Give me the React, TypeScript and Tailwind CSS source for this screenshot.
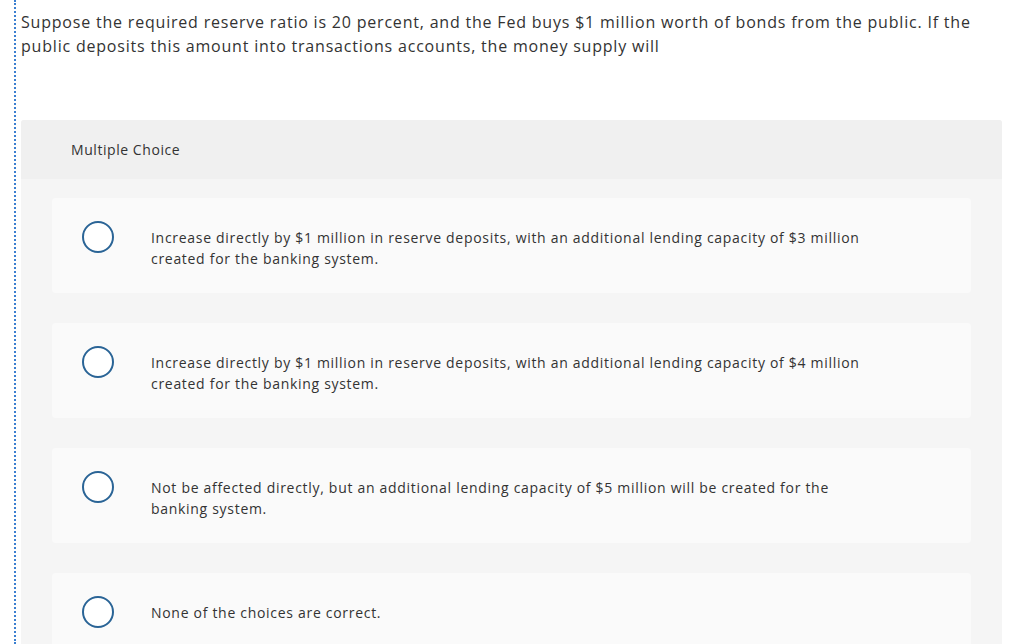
import React from "react";

const options = [
  "Increase directly by $1 million in reserve deposits, with an additional lending capacity of $3 million created for the banking system.",
  "Increase directly by $1 million in reserve deposits, with an additional lending capacity of $4 million created for the banking system.",
  "Not be affected directly, but an additional lending capacity of $5 million will be created for the banking system.",
  "None of the choices are correct.",
];

export default function App() {
  return (
    <div
      className="w-[1024px] h-[644px] overflow-hidden bg-white text-[#333333] flex"
      style={{ fontFamily: "'Open Sans', 'Noto Sans', sans-serif" }}
    >
      <div className="w-[14px] shrink-0" />
      <div className="w-0 border-l-2 border-dotted border-[#3b7fd0] h-full shrink-0" />
      <div className="flex-1 pl-[5px] pr-[22px]">
        <p className="pt-[10px] text-[16px] leading-[24px] tracking-[0.05em] text-[#333333]">
          Suppose the required reserve ratio is 20 percent, and the Fed buys $1 million worth of bonds from the public. If the public deposits this amount into transactions accounts, the money supply will
        </p>
        <div className="mt-[62px] bg-[#f5f5f5] rounded-t-[3px]">
          <div className="h-[59px] bg-[#f0f0f0] flex items-center pl-[50px] text-[14px] tracking-[0.04em] text-[#333333] rounded-t-[3px]">
            Multiple Choice
          </div>
          <div className="px-[31px] pt-[19px] flex flex-col gap-[30px] pb-[30px]">
            {options.map((o, i) => (
              <div key={i} className="h-[95px] bg-[#fafafa] rounded-[4px] flex items-start">
                <div className="w-[99px] shrink-0 pl-[30px] pt-[23px]">
                  <div className="w-[32px] h-[32px] rounded-full border-2 border-[#2a6496] bg-white" />
                </div>
                <div className="pt-[29px] text-[14px] leading-[21px] tracking-[0.05em] text-[#333333] pr-[99px]">{o}</div>
              </div>
            ))}
          </div>
        </div>
      </div>
    </div>
  );
}
